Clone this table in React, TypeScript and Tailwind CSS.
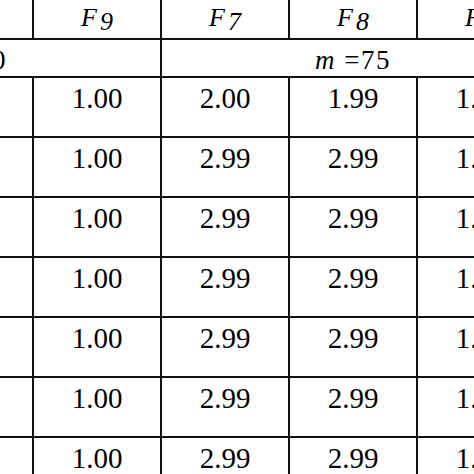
const serif = "font-['Liberation_Serif','Times_New_Roman',serif]";

const headers = ['', '', '9', '7', '8', '6'];

const rows: string[][] = [
  ['', '', '1.00', '2.00', '1.99', '1.99'],
  ['', '', '1.00', '2.99', '2.99', '1.99'],
  ['', '', '1.00', '2.99', '2.99', '1.99'],
  ['', '', '1.00', '2.99', '2.99', '1.99'],
  ['', '', '1.00', '2.99', '2.99', '1.99'],
  ['', '', '1.00', '2.99', '2.99', '1.99'],
  ['', '', '1.00', '2.99', '2.99', '1.99'],
];

function HeaderCell({ n }: { n: string }) {
  return (
    <div className="h-[38px] bg-white text-center text-[26px] leading-[36px] italic text-black">
      {n && (
        <span>
          F<span className="ml-[3px] inline-block translate-y-[4px]">{n}</span>
        </span>
      )}
    </div>
  );
}

export default function App() {
  return (
    <div className={`w-[474px] h-[474px] overflow-hidden bg-white ${serif}`}>
      <div className="ml-[-222px] grid w-max grid-cols-[repeat(6,126px)] gap-[2px] bg-[#111]">
        {headers.map((h, i) => (
          <HeaderCell key={i} n={h} />
        ))}

        <div className="col-span-3 h-[36px] bg-white pt-[4px] text-center text-[27px] leading-[32px] tracking-[1.5px] text-black">
          <i>m</i> =50
        </div>
        <div className="col-span-3 h-[36px] bg-white pt-[4px] text-center text-[27px] leading-[32px] tracking-[1.5px] text-black">
          <i>m</i> =75
        </div>

        {rows.map((r, ri) =>
          r.map((v, ci) => (
            <div
              key={`${ri}-${ci}`}
              className="h-[58px] bg-white pt-[4px] text-center text-[29px] leading-[32px] text-black"
            >
              {v}
            </div>
          ))
        )}
      </div>
    </div>
  );
}
